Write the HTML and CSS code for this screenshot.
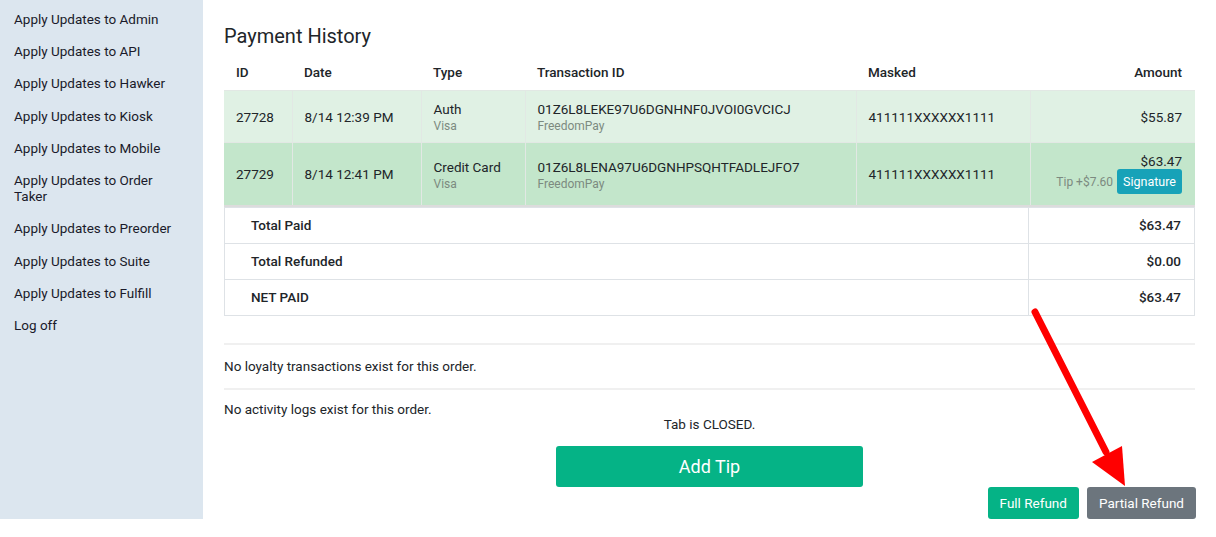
FILE: index.html
```html
<!DOCTYPE html>
<html lang="en">
<head>
  <meta charset="UTF-8">
  <title>Order Payments</title>
  <meta name="viewport" content="width=device-width, initial-scale=1.0">
  <link rel="stylesheet" href="styles.css">
</head>
<body>
<div class="page">
  <div class="sidebar">
    <ul class="side-menu">
      <li><a href="#">Apply Updates to Admin</a></li>
      <li><a href="#">Apply Updates to API</a></li>
      <li><a href="#">Apply Updates to Hawker</a></li>
      <li><a href="#">Apply Updates to Kiosk</a></li>
      <li><a href="#">Apply Updates to Mobile</a></li>
      <li><a href="#">Apply Updates to Order Taker</a></li>
      <li><a href="#">Apply Updates to Preorder</a></li>
      <li><a href="#">Apply Updates to Suite</a></li>
      <li><a href="#">Apply Updates to Fulfill</a></li>
      <li><a href="#">Log off</a></li>
    </ul>
  </div>

  <div class="main">
    <h2>Payment History</h2>

    <table class="payments">
      <thead>
        <tr>
          <th class="c-id">ID</th>
          <th class="c-date">Date</th>
          <th class="c-type">Type</th>
          <th class="c-trans">Transaction ID</th>
          <th class="c-mask">Masked</th>
          <th class="c-amt">Amount</th>
        </tr>
      </thead>
      <tbody>
        <tr class="row-auth">
          <td>27728</td>
          <td>8/14 12:39 PM</td>
          <td>Auth<div class="sub">Visa</div></td>
          <td>01Z6L8LEKE97U6DGNHNF0JVOI0GVCICJ<div class="sub">FreedomPay</div></td>
          <td>411111XXXXXX1111</td>
          <td class="c-amt">$55.87</td>
        </tr>
        <tr class="row-paid">
          <td>27729</td>
          <td>8/14 12:41 PM</td>
          <td>Credit Card<div class="sub">Visa</div></td>
          <td>01Z6L8LENA97U6DGNHPSQHTFADLEJFO7<div class="sub">FreedomPay</div></td>
          <td>411111XXXXXX1111</td>
          <td class="c-amt">
            $63.47
            <div class="tip-line"><span class="tip">Tip +$7.60</span><button class="btn btn-info">Signature</button></div>
          </td>
        </tr>
      </tbody>
    </table>

    <table class="totals">
      <tr><td>Total Paid</td><td class="c-amt">$63.47</td></tr>
      <tr><td>Total Refunded</td><td class="c-amt">$0.00</td></tr>
      <tr><td>NET PAID</td><td class="c-amt">$63.47</td></tr>
    </table>

    <div class="section">No loyalty transactions exist for this order.</div>
    <div class="section last">No activity logs exist for this order.</div>

    <div class="tab-status">
      <p>Tab is CLOSED.</p>
      <button class="btn btn-green btn-lg">Add Tip</button>
    </div>

    <div class="refunds">
      <button class="btn btn-green">Full Refund</button>
      <button class="btn btn-grey">Partial Refund</button>
    </div>
  </div>
</div>

<!-- annotation arrow drawn over the screenshot -->
<svg class="arrow" width="1216" height="537" viewBox="0 0 1216 537">
  <line x1="1035" y1="312" x2="1106" y2="452" stroke="#ff0000" stroke-width="7" stroke-linecap="round"/>
  <polygon points="1125,486 1092,462 1122,446" fill="#ff0000"/>
</svg>
</body>
</html>
```

FILE: styles.css
```css
body {
  margin: 0;
  font-family: Roboto, "Liberation Sans", sans-serif;
  font-size: 13.5px;
  color: #212529;
  background: #fff;
}

.page {
  display: flex;
  align-items: stretch;
}

.sidebar {
  width: 203px;
  flex: none;
  background: #dce6ef;
}

.side-menu {
  list-style: none;
  margin: 0;
  padding: 3px 0 0;
}

.side-menu li a {
  display: block;
  padding: 8px 22px 8px 14px;
  line-height: 16.2px;
  color: #1a1a2a;
  text-decoration: none;
}

.main {
  flex: 1;
  padding: 24px 21px 0 21px;
  min-width: 0;
}

h2 {
  margin: 0 0 6px;
  font-size: 20px;
  font-weight: 400;
  line-height: 24px;
}

table {
  width: 100%;
  border-collapse: collapse;
}

.payments th {
  text-align: left;
  font-weight: 500;
  padding: 8px 12px;
  line-height: 20px;
  border: none;
}

.payments td {
  padding: 8px 12px;
  line-height: 20px;
  border: 1px solid #e2e8e4;
  vertical-align: middle;
}

.payments td:first-child { border-left: none; }
.payments td:last-child { border-right: none; }

.c-id { width: 44px; }
.c-date { width: 105px; }
.c-type { width: 80px; }
.c-trans { width: 307px; }
.c-mask { width: 150px; }

.payments .c-amt {
  text-align: right;
  padding-right: 13px;
}

.row-auth td { background: #e0f1e4; }
.row-paid td {
  background: #c3e6cb;
  border-bottom: 2px solid #dcdcdc;
}

.sub {
  font-size: 12px;
  line-height: 15px;
  color: #7c8a80;
}

.row-paid td.c-amt {
  padding-top: 8px;
  padding-bottom: 11px;
}

.tip-line {
  display: flex;
  justify-content: flex-end;
  align-items: center;
  gap: 4px;
  margin-top: -2px;
}

.tip {
  font-size: 12px;
  color: #7c8a80;
}

.btn {
  font-family: inherit;
  border: none;
  border-radius: 3px;
  color: #fff;
  cursor: pointer;
}

.btn-info {
  background: #17a2b8;
  font-size: 12.5px;
  padding: 4px 6px;
  line-height: 17px;
}

.totals td {
  border: 1px solid #dee2e6;
  padding: 8px 12px 8px 26px;
  height: 19px;
  line-height: 19px;
  font-weight: 500;
}

.totals td.c-amt {
  width: 140px;
  text-align: right;
  padding: 8px 13px 8px 12px;
}

.section {
  border-top: 2px solid #f0f0f0;
  padding: 13px 0 14px;
  line-height: 16px;
}

.totals + .section {
  margin-top: 27px;
}

.section.last {
  padding: 11px 0 0;
}

.tab-status {
  text-align: center;
}

.tab-status p {
  margin: -1px 0 14px;
  line-height: 16px;
}

.btn-green {
  background: #05b386;
}

.btn-lg {
  width: 307px;
  height: 41px;
  font-size: 18px;
}

.refunds {
  display: flex;
  justify-content: flex-end;
  gap: 8px;
  margin-right: -1px;
}

.refunds .btn {
  height: 32px;
  font-size: 13.5px;
  padding: 0 12px;
}

.btn-full {
  padding: 0 13px;
}

.btn-grey {
  background: #6c757d;
}

.arrow {
  position: absolute;
  top: 0;
  left: 0;
  pointer-events: none;
}
```
